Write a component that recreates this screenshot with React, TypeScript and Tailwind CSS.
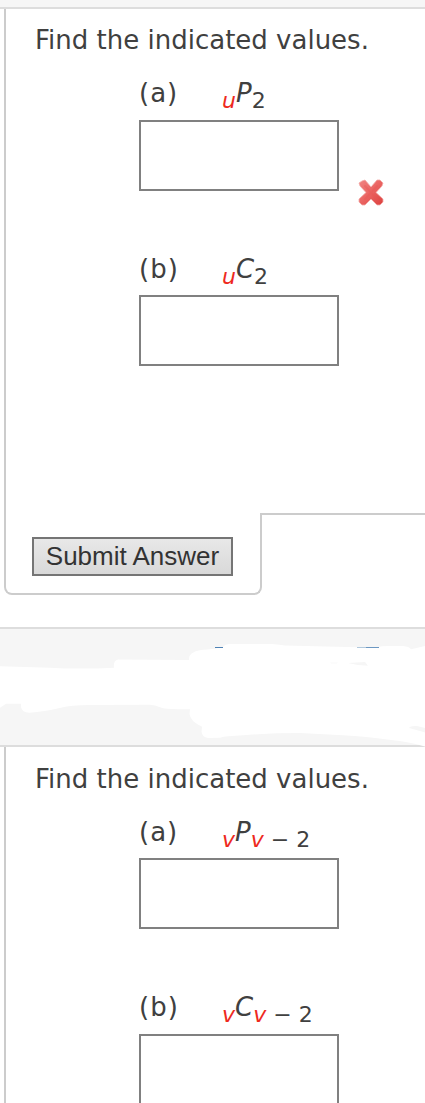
import React from 'react';

interface PartProps {
  label: string;
  children: React.ReactNode;
  gap?: string;
  wrong?: boolean;
}

const Var: React.FC<{ children: React.ReactNode }> = ({ children }) => (
  <span className="align-[-6px] text-[22px] leading-none italic text-[#ee2a1e]">{children}</span>
);

const Sub: React.FC<{ children: React.ReactNode }> = ({ children }) => (
  <span className="align-[-6px] text-[22px] leading-none">{children}</span>
);

const WrongMark = () => (
  <svg width="28" height="30" viewBox="0 0 28 30" className="-mb-4">
    <defs>
      <linearGradient id="wrong" x1="0" y1="0" x2="1" y2="1">
        <stop offset="0" stopColor="#f08583" />
        <stop offset="0.5" stopColor="#ea6462" />
        <stop offset="1" stopColor="#dc403e" />
      </linearGradient>
    </defs>
    <path
      d="M5 4 L8 3 L14 10 L20 3 L23 3 L26 6 L25 9 L19 15.5 L26 22 L26 25 L23 28 L20 28 L14 22 L8 28 L5 28 L2 25 L2 22 L9 15.5 L3 9 L2 6 Z"
      fill="url(#wrong)"
      stroke="#f3a9a7"
      strokeWidth="0.8"
      strokeLinejoin="round"
    />
    <path d="M8 9 L20 22 M20 9 L8 22" stroke="#e95553" strokeWidth="2" strokeLinecap="round" opacity="0.35" />
  </svg>
);

const Part: React.FC<PartProps> = ({ label, children, gap = 'gap-3', wrong }) => (
  <div className={`flex flex-col ${gap}`}>
    <div className="flex h-[30px] whitespace-pre text-[26px] leading-[30px]">
      <span className="w-[83px] shrink-0 tracking-[1px]">{label}</span>
      <div>{children}</div>
    </div>
    <div className="flex items-end gap-[18px]">
      <input type="text" className="h-[71px] w-[200px] shrink-0 border-2 border-[#808080] bg-white px-2 outline-none" />
      {wrong && <WrongMark />}
    </div>
  </div>
);

const Heading = () => (
  <h2 className="whitespace-nowrap pl-[29px] text-[26px] leading-[30px]">Find the indicated values.</h2>
);

const HeaderBand = () => (
  <div className="h-[120px] border-y-2 border-[#dddddd] bg-[#f6f6f6]">
    <svg width="425" height="118" viewBox="0 0 425 118" className="block">
      <path
        d="M0 37.3 L50 38.7 Q80 40.5 114 38.7 Q113 31.5 118 30.5 L189 31 Q188 23 201 21 L215 19.7 L223 17.7 Q225 15 229 15 L272 15 Q280 15.5 285 16.5 L357 18.3 L378 18.3 Q381 17 388 17 L403 17 Q409 17.5 411 20.3 L425 17 L425 117.5 Q405 112 393 111.3 Q365 107.5 343 106.3 L300 104 Q270 104 243 106.3 Q226 107 220 108.7 L208 109 Q202 108 201.5 102.5 L202 97.7 Q190 92 189.5 85 L190 80.3 Q172 80.5 163 79.3 L155 76.5 L150 75.7 L90 76 Q70 76 62 78.5 Q43 83 30 83.7 Q22 84 21 78 L21 74.7 L6 74.7 L0 78.7 Z"
        fill="#ffffff"
      />
      <path d="M348 34 L365 33 L368 36.7 Q358 36.5 348 34 Z" fill="#f6f6f6" />
      <path d="M409 99 Q410 96.5 417 97 L425 99 L425 103.5 Q414 100 409 99 Z" fill="#f6f6f6" />
      <path d="M330 33.5 L338 33.5 L337 34.5 L331 34.5 Z" fill="#f9f9f9" />
      {/* tops of the covered links */}
      <path d="M215 18.5 L223 18.5" stroke="#4f82b5" strokeWidth="1" />
      <path d="M357 18.5 L366 18.5" stroke="#b2c9dd" strokeWidth="1" />
      <path d="M366 18.5 L379 18.5" stroke="#6d98c2" strokeWidth="1" />
    </svg>
  </div>
);

export default function App() {
  return (
    <div className="flex h-[1103px] w-[425px] flex-col overflow-hidden bg-white font-['DejaVu_Sans',sans-serif] text-[#404040]">
      <div className="h-[9px] shrink-0 border-b-2 border-[#dddddd] bg-[#f6f6f6]" />

      <section className="ml-1 shrink-0 pb-8">
        <div className="flex h-[504px] flex-col gap-[23px] border-l-2 border-[#cccccc] pt-4">
          <Heading />
          <div className="flex flex-col gap-[63px] pl-[133px]">
            <Part label="(a)" wrong>
              <Var>u</Var>
              <i>P</i>
              <Sub>2</Sub>
            </Part>
            <Part label="(b)" gap="gap-[11px]">
              <Var>u</Var>
              <i>C</i>
              <Sub>2</Sub>
            </Part>
          </div>
        </div>
        <div className="flex">
          <div className="h-[82px] w-[258px] rounded-b-lg border-2 border-t-0 border-[#cccccc] pl-[26px] pt-6">
            <button className="h-[39px] w-[201px] whitespace-nowrap border-2 border-[#757575] bg-linear-to-b from-[#e8e8e8] to-[#d9d9d9] font-['Liberation_Sans',sans-serif] text-[26px] leading-[35px] text-[#333333]">
              Submit Answer
            </button>
          </div>
          <div className="flex-1 border-t-2 border-[#cccccc]" />
        </div>
      </section>

      <div className="shrink-0">
        <HeaderBand />
      </div>

      <section className="ml-1 flex h-[400px] shrink-0 flex-col gap-[23px] border-l-2 border-[#cccccc] pt-[17px]">
        <Heading />
        <div className="flex flex-col gap-[63px] pl-[133px]">
          <Part label="(a)" gap="gap-[11px]">
            <Var>v</Var>
            <i>P</i>
            <Var>v</Var>
            <Sub> − 2</Sub>
          </Part>
          <Part label="(b)">
            <Var>v</Var>
            <i>C</i>
            <Var>v</Var>
            <Sub> − 2</Sub>
          </Part>
        </div>
      </section>
    </div>
  );
}
